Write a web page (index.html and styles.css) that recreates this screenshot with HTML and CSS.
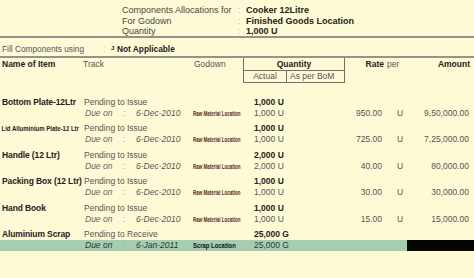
FILE: index.html
```html
<!DOCTYPE html>
<html lang="en">
<head>
    <meta charset="UTF-8">
    <title>Components Allocations</title>
    <link rel="stylesheet" href="styles.css">
</head>
<body>
    <div class="top">
        <div class="top-grid">
            <span>Components Allocations for</span><span class="dim">:</span><b>Cooker 12Litre</b>
            <span>For Godown</span><span class="dim">:</span><b>Finished Goods Location</b>
            <span>Quantity</span><span class="dim">:</span><b>1,000 U</b>
        </div>
    </div>

    <div class="fill">
        <span class="fill-label">Fill Components using</span>
        <span class="dim fill-colon">:</span>
        <span class="fill-mark">J</span>
        <b>Not Applicable</b>
    </div>

    <div class="head">
        <div class="h-name">Name of Item</div>
        <div class="h-track">Track</div>
        <div class="h-godown">Godown</div>
        <div class="h-qty">Quantity</div>
        <div class="h-actual">Actual</div>
        <div class="h-bom">As per BoM</div>
        <div class="h-rate">Rate</div>
        <div class="h-per">per</div>
        <div class="h-amount">Amount</div>
    </div>

    <div class="rows">
        <div class="item">
            <div class="line">
                <span class="c-name">Bottom Plate-12Ltr</span>
                <span class="c-track">Pending to Issue</span>
                <span class="c-actual b">1,000 U</span>
            </div>
            <div class="line">
                <span class="c-track due"><i class="due-on">Due on</i><span class="colon">:</span><i class="date">6-Dec-2010</i></span>
                <span class="c-loc">Raw Material Location</span>
                <span class="c-actual">1,000 U</span>
                <span class="c-rate">950.00</span>
                <span class="c-per">U</span>
                <span class="c-amount">9,50,000.00</span>
            </div>
        </div>

        <div class="item">
            <div class="line">
                <span class="c-name narrow">Lid Alluminium Plate-12 Ltr</span>
                <span class="c-track">Pending to Issue</span>
                <span class="c-actual b">1,000 U</span>
            </div>
            <div class="line">
                <span class="c-track due"><i class="due-on">Due on</i><span class="colon">:</span><i class="date">6-Dec-2010</i></span>
                <span class="c-loc">Raw Material Location</span>
                <span class="c-actual">1,000 U</span>
                <span class="c-rate">725.00</span>
                <span class="c-per">U</span>
                <span class="c-amount">7,25,000.00</span>
            </div>
        </div>

        <div class="item">
            <div class="line">
                <span class="c-name">Handle (12 Ltr)</span>
                <span class="c-track">Pending to Issue</span>
                <span class="c-actual b">2,000 U</span>
            </div>
            <div class="line">
                <span class="c-track due"><i class="due-on">Due on</i><span class="colon">:</span><i class="date">6-Dec-2010</i></span>
                <span class="c-loc">Raw Material Location</span>
                <span class="c-actual">2,000 U</span>
                <span class="c-rate">40.00</span>
                <span class="c-per">U</span>
                <span class="c-amount">80,000.00</span>
            </div>
        </div>

        <div class="item">
            <div class="line">
                <span class="c-name">Packing Box (12 Ltr)</span>
                <span class="c-track">Pending to Issue</span>
                <span class="c-actual b">1,000 U</span>
            </div>
            <div class="line">
                <span class="c-track due"><i class="due-on">Due on</i><span class="colon">:</span><i class="date">6-Dec-2010</i></span>
                <span class="c-loc">Raw Material Location</span>
                <span class="c-actual">1,000 U</span>
                <span class="c-rate">30.00</span>
                <span class="c-per">U</span>
                <span class="c-amount">30,000.00</span>
            </div>
        </div>

        <div class="item">
            <div class="line">
                <span class="c-name">Hand Book</span>
                <span class="c-track">Pending to Issue</span>
                <span class="c-actual b">1,000 U</span>
            </div>
            <div class="line">
                <span class="c-track due"><i class="due-on">Due on</i><span class="colon">:</span><i class="date">6-Dec-2010</i></span>
                <span class="c-loc">Raw Material Location</span>
                <span class="c-actual">1,000 U</span>
                <span class="c-rate">15.00</span>
                <span class="c-per">U</span>
                <span class="c-amount">15,000.00</span>
            </div>
        </div>

        <div class="item">
            <div class="line">
                <span class="c-name">Aluminium Scrap</span>
                <span class="c-track">Pending to Receive</span>
                <span class="c-actual b">25,000 G</span>
            </div>
            <div class="line sel">
                <span class="c-track due"><i class="due-on">Due on</i><span class="colon">:</span><i class="date">6-Jan-2011</i></span>
                <span class="c-loc scrap">Scrap Location</span>
                <span class="c-actual">25,000 G</span>
                <span class="c-amount cursor"></span>
            </div>
        </div>
    </div>
</body>
</html>
```

FILE: styles.css
```css
body {
    margin: 0;
    width: 474px;
    height: 278px;
    overflow: hidden;
    background-color: #fdfad5;
    font-family: "Liberation Sans", Arial, sans-serif;
    font-size: 8.5px;
    color: #555;
}
b, .b {
    font-weight: bold;
    color: #222;
}
.dim {
    color: #c4c2a8;
}

/* top block */
.top {
    height: 31px;
    padding-top: 5px;
    border-bottom: 2px solid #94948a;
}
.top-grid {
    display: grid;
    grid-template-columns: 116px 8px auto;
    padding-left: 122px;
    font-size: 9px;
    line-height: 10.5px;
    color: #484848;
}

/* fill components row */
.fill {
    display: flex;
    height: 11px;
    padding-top: 6px;
    padding-bottom: 1px;
    line-height: 11px;
    border-bottom: 2px solid #94948a;
    font-size: 8.3px;
}
.fill-label {
    width: 101px;
    padding-left: 2px;
}
.fill-colon {
    width: 8px;
}
.fill-mark {
    width: 6px;
    font-size: 6px;
    font-weight: bold;
    color: #222;
    line-height: 8px;
}

/* column header */
.head {
    display: grid;
    grid-template-columns: 83px 110px 50px 44px 58px 40px 22px 67px;
    grid-template-rows: 13px 12px;
    line-height: 13px;
}
.h-name {
    grid-row: 1 / 3;
    padding-left: 2px;
    font-weight: bold;
    color: #222;
}
.h-track {
    grid-row: 1 / 3;
    grid-column: 2;
}
.h-godown {
    grid-row: 1 / 3;
    grid-column: 3;
    padding-left: 1px;
}
.h-qty {
    grid-column: 4 / 6;
    grid-row: 1;
    text-align: center;
    font-weight: bold;
    color: #222;
    border-left: 1px solid #707070;
    border-right: 1px solid #707070;
    border-bottom: 1px solid #707070;
    line-height: 12px;
}
.h-actual, .h-bom {
    grid-row: 2;
    line-height: 11px;
    border-bottom: 1px solid #707070;
    border-right: 1px solid #707070;
}
.h-actual {
    grid-column: 4;
    text-align: center;
    border-left: 1px solid #707070;
}
.h-bom {
    grid-column: 5;
    padding-left: 3px;
}
.h-rate {
    grid-row: 1 / 3;
    grid-column: 6;
    text-align: right;
    padding-right: 1px;
    font-weight: bold;
    color: #222;
}
.h-per {
    grid-row: 1 / 3;
    grid-column: 7;
    padding-left: 2px;
}
.h-amount {
    grid-row: 1 / 3;
    grid-column: 8;
    text-align: right;
    padding-right: 4px;
    font-weight: bold;
    color: #222;
}

/* item rows */
.rows {
    margin-top: 13.5px;
}
.item {
    margin-bottom: 4.5px;
}
.line {
    display: grid;
    grid-template-columns: 83px 110px 50px 44px 58px 40px 22px 67px;
    height: 11px;
    line-height: 11px;
    white-space: nowrap;
}
.c-name {
    grid-column: 1;
    padding-left: 2px;
    font-weight: bold;
    color: #222;
    letter-spacing: -0.12px;
}
.c-name.narrow {
    font-size: 8px;
    letter-spacing: 0;
    transform: scaleX(0.75);
    transform-origin: left center;
}
.c-track {
    grid-column: 2;
    padding-left: 1px;
}
.due {
    display: flex;
    padding-left: 2px;
}
.due-on {
    width: 38px;
    color: #666;
}
.colon {
    width: 13px;
    color: #999;
}
.date {
    color: #555;
}
.c-loc {
    grid-column: 3;
    font-size: 7.5px;
    font-weight: bold;
    color: #5a2a2a;
    transform: scaleX(0.6);
    transform-origin: left center;
}
.c-loc.scrap {
    font-size: 8px;
    color: #111;
    transform: scaleX(0.74);
}
.c-actual {
    grid-column: 4;
    padding-left: 11px;
}
.c-rate {
    grid-column: 6;
    text-align: right;
    padding-right: 3px;
}
.c-per {
    grid-column: 7;
    padding-left: 12px;
}
.c-amount {
    grid-column: 8;
    text-align: right;
    padding-right: 5px;
}

/* selected line */
.line.sel {
    background-color: #a5ceb0;
    color: #333;
}
.line.sel .due-on, .line.sel .date {
    color: #333;
}
.c-amount.cursor {
    background-color: #050505;
}
```
